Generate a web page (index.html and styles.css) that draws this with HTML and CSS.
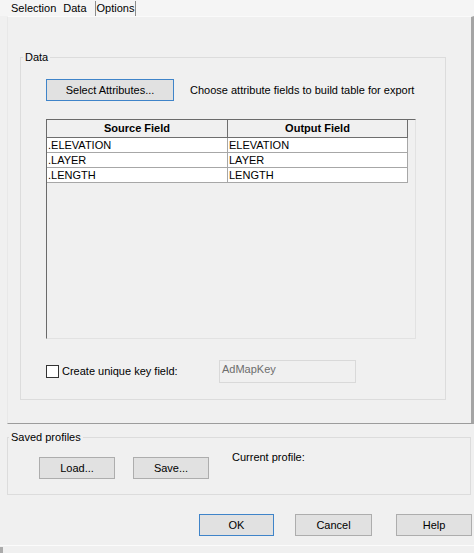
FILE: index.html
```
<!DOCTYPE html>
<html>
<head>
<meta charset="utf-8">
<link rel="stylesheet" href="styles.css">
</head>
<body>
<div class="tabs">
  <span class="tab tab-first">Selection</span>
  <span class="tab tab-active">Data</span>
  <span class="tab tab-boxed">Options</span>
</div>
<div class="tabpage">
  <fieldset class="group group-data">
    <legend class="legend legend-data">Data</legend>
    <div class="group-body data-body">
      <div class="attr-row">
        <button class="btn btn-default btn-attr">Select Attributes...</button>
        <span class="hint">Choose attribute fields to build table for export</span>
      </div>
      <div class="grid">
        <table class="fields">
          <colgroup><col class="col1"><col class="col2"></colgroup>
          <thead>
            <tr><th>Source Field</th><th>Output Field</th></tr>
          </thead>
          <tbody>
            <tr><td>.ELEVATION</td><td>ELEVATION</td></tr>
            <tr><td>.LAYER</td><td>LAYER</td></tr>
            <tr><td>.LENGTH</td><td>LENGTH</td></tr>
          </tbody>
        </table>
      </div>
      <div class="key-row">
        <label class="check-label"><span class="checkbox"></span><span>Create unique key field:</span></label>
        <div class="keybox">AdMapKey</div>
      </div>
    </div>
  </fieldset>
</div>
<fieldset class="group group-profiles">
  <legend class="legend legend-profiles">Saved profiles</legend>
  <div class="group-body profiles-body">
    <button class="btn btn-load">Load...</button>
    <button class="btn btn-save">Save...</button>
    <span class="current">Current profile:</span>
  </div>
</fieldset>
<div class="dialog-buttons">
  <button class="btn btn-default btn-ok">OK</button>
  <button class="btn btn-cancel">Cancel</button>
  <button class="btn btn-help">Help</button>
</div>
<div class="footer"><div class="grip"></div></div>
</body>
</html>
```
FILE: styles.css
```
html, body {
  margin: 0;
  padding: 0;
}
body {
  width: 474px;
  height: 553px;
  overflow: hidden;
  background: #f0f0f0;
  color: #000;
  font-family: "Liberation Sans", Arial, sans-serif;
  font-size: 11px;
  line-height: 13px;
}
.tabs {
  display: flex;
  align-items: center;
  height: 16px;
  background: #f5f5f5;
}
.tab {
  line-height: 13px;
}
.tab-first {
  margin-left: 11px;
}
.tab-active {
  margin-left: 7px;
}
.tab-boxed {
  margin-left: 8px;
  border-left: 1px solid #8c8c8c;
  border-right: 1px solid #8c8c8c;
  padding: 1px 1px 1px 1px;
  margin-top: 1px;
}
.tabpage {
  box-sizing: border-box;
  margin-left: 7px;
  width: 467px;
  height: 408px;
  border-top: 1px solid #fafafa;
  border-left: 1px solid #e8e8e8;
  border-right: 3px solid #a4a4a4;
  border-bottom: 1px solid #9c9c9c;
  padding: 33px 0 0 12px;
}
.group {
  box-sizing: border-box;
  margin: 0;
  padding: 0;
  min-width: 0;
  border: 1px solid #dcdcdc;
}
.legend {
  padding: 0 2px;
  line-height: 14px;
}
.legend-data {
  margin-left: 2px;
}
.group-data {
  width: 426px;
}
.data-body {
  padding: 15px 0 16px 25px;
}
.btn {
  box-sizing: border-box;
  margin: 0;
  padding: 0;
  height: 22px;
  background: #e1e1e1;
  border: 1px solid #adadad;
  font-family: inherit;
  font-size: 11px;
  color: #000;
}
.btn-default {
  border-color: #3f84c9;
}
.attr-row {
  display: flex;
  align-items: center;
  gap: 16px;
}
.btn-attr {
  width: 128px;
}
.grid {
  box-sizing: border-box;
  margin-top: 18px;
  width: 370px;
  height: 220px;
  border-top: 1px solid #6a6a6a;
  border-left: 1px solid #6a6a6a;
  border-right: 1px solid #e2e2e2;
  border-bottom: 1px solid #e2e2e2;
}
.fields {
  table-layout: fixed;
  width: 361px;
  border-collapse: separate;
  border-spacing: 0;
}
.col1 {
  width: 181px;
}
.col2 {
  width: 180px;
}
.fields th {
  box-sizing: border-box;
  height: 18px;
  padding: 0;
  font-weight: bold;
  text-align: center;
  line-height: 17px;
  background: #f0f0f0;
  border-right: 1px solid #6e6e6e;
  border-bottom: 1px solid #6e6e6e;
}
.fields td {
  padding: 0 0 0 1px;
  line-height: 14px;
  height: 14px;
  background: #fff;
  text-align: left;
  border-right: 1px solid #a7a7a7;
  border-bottom: 1px solid #a7a7a7;
  white-space: nowrap;
  overflow: hidden;
}
.key-row {
  display: flex;
  align-items: center;
  margin-top: 21px;
}
.check-label {
  display: flex;
  align-items: center;
  width: 173px;
}
.checkbox {
  box-sizing: border-box;
  width: 13px;
  height: 13px;
  margin-right: 3px;
  border: 1px solid #333;
  background: #fff;
}
.keybox {
  box-sizing: border-box;
  width: 137px;
  height: 23px;
  padding: 1px 0 0 2px;
  line-height: 15px;
  border: 1px solid #d9d9d9;
  background: #f0f0f0;
  color: #6d6d6d;
}
.group-profiles {
  margin-top: 6px;
  margin-left: 7px;
  width: 464px;
}
.legend-profiles {
  margin-left: 1px;
}
.profiles-body {
  display: flex;
  align-items: flex-start;
  padding: 13px 0 15px 31px;
}
.btn-load, .btn-save {
  width: 76px;
}
.btn-save {
  margin-left: 18px;
}
.current {
  margin-left: 23px;
  margin-top: -6px;
}
.dialog-buttons {
  display: flex;
  margin-top: 19px;
  padding-left: 199px;
}
.btn-ok {
  width: 75px;
}
.btn-cancel {
  width: 77px;
  margin-left: 21px;
}
.btn-help {
  width: 76px;
  margin-left: 24px;
}
.footer {
  margin-top: 9px;
  height: 8px;
  border-top: 1px solid #fbfbfb;
}
.grip {
  width: 3px;
  height: 6px;
  margin-top: 1px;
  background: #ababab;
}
```
